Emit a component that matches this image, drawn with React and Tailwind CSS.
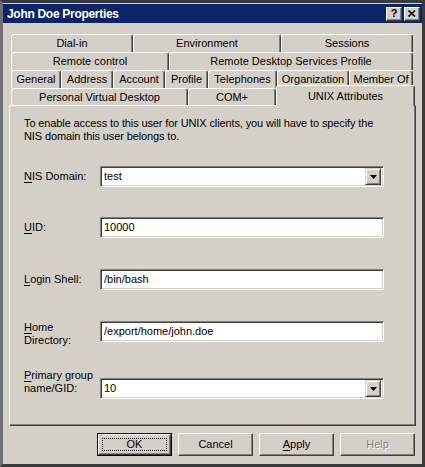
import React from 'react';

const font = { fontFamily: '"Liberation Sans", Arial, sans-serif' };

const tabRows = [
    [
        { label: 'Dial-in', w: 'w-[122px]' },
        { label: 'Environment', w: 'w-[148px]' },
        { label: 'Sessions', w: 'w-[132px]' },
    ],
    [
        { label: 'Remote control', w: 'w-[158px]' },
        { label: 'Remote Desktop Services Profile', w: 'w-[244px]' },
    ],
    [
        { label: 'General', w: 'w-[50px]' },
        { label: 'Address', w: 'w-[52px]' },
        { label: 'Account', w: 'w-[52px]' },
        { label: 'Profile', w: 'w-[43px]' },
        { label: 'Telephones', w: 'w-[69px]' },
        { label: 'Organization', w: 'w-[72px]' },
        { label: 'Member Of', w: 'w-[64px]' },
    ],
];

const Tab = ({ label, w, h = 'h-[18px]' }) => (
    <div
        className={`${w} ${h} flex items-center justify-center border-t border-l border-r border-t-white border-l-white border-r-[#404040] rounded-t-[3px] shadow-[inset_-1px_0_0_#808080] text-[11px] text-black whitespace-nowrap`}
    >
        {label}
    </div>
);

const Sunken = ({ children }) => (
    <div className="h-[21px] w-[284px] flex items-center bg-white border-t border-l border-t-[#808080] border-l-[#808080] border-b border-r border-b-white border-r-white shadow-[inset_1px_1px_0_#404040,inset_-1px_-1px_0_#d4d0c8]">
        {children}
    </div>
);

const TextField = ({ value }) => (
    <Sunken>
        <span className="pl-[3px] text-[11px] text-black">{value}</span>
    </Sunken>
);

const SelectField = ({ value }) => (
    <Sunken>
        <span className="pl-[3px] text-[11px] text-black flex-1">{value}</span>
        <div className="w-[16px] h-[17px] mr-[2px] bg-[#d4d0c8] border-t border-l border-t-[#d4d0c8] border-l-[#d4d0c8] border-b border-r border-b-[#404040] border-r-[#404040] shadow-[inset_1px_1px_0_#fff,inset_-1px_-1px_0_#808080] flex items-center justify-center">
            <svg width="7" height="4" viewBox="0 0 7 4">
                <path d="M0 0h7L3.5 4z" fill="#000" />
            </svg>
        </div>
    </Sunken>
);

const U = ({ children }) => <span className="underline underline-offset-[2px]">{children}</span>;

const Button = ({ children, isDefault, disabled }) => {
    if (isDefault) {
        return (
            <div className="w-[75px] h-[23px] border border-black">
                <div className="w-full h-full border-t border-l border-t-white border-l-white border-b border-r border-b-[#404040] border-r-[#404040] shadow-[inset_-1px_-1px_0_#808080] p-[3px]">
                    <div className="w-full h-full border border-dotted border-black flex items-center justify-center text-[11px] text-black">
                        {children}
                    </div>
                </div>
            </div>
        );
    }
    return (
        <div
            className={`w-[75px] h-[23px] flex items-center justify-center border-t border-l border-t-white border-l-white border-b border-r border-b-[#404040] border-r-[#404040] shadow-[inset_-1px_-1px_0_#808080] text-[11px] ${
                disabled ? 'text-[#808080] [text-shadow:1px_1px_0_#fff]' : 'text-black'
            }`}
        >
            {children}
        </div>
    );
};

const TitleButton = ({ children }) => (
    <div className="w-[16px] h-[14px] bg-[#d4d0c8] border-t border-l border-t-white border-l-white border-b border-r border-b-[#404040] border-r-[#404040] shadow-[inset_-1px_-1px_0_#808080] flex items-center justify-center">
        {children}
    </div>
);

export default function App() {
    return (
        <div className="w-[425px] h-[467px] bg-[#d4d0c8] border-[3px] border-[#3a3a3a] border-l-[#6e6e6e] flex flex-col" style={font}>
            {/* title bar */}
            <div className="mt-px h-[19px] bg-[#0a246a] flex items-center pl-[4px] pr-[2px]">
                <span className="text-white font-bold text-[12px] flex-1 tracking-[-0.3px]">John Doe Properties</span>
                <div className="flex gap-[2px]">
                    <TitleButton>
                        <span className="text-[11px] font-bold leading-none text-black">?</span>
                    </TitleButton>
                    <TitleButton>
                        <svg width="8" height="7" viewBox="0 0 8 7">
                            <path d="M0.5 0.5L7 6.5M7 0.5L0.5 6.5" stroke="#000" strokeWidth="1.6" />
                        </svg>
                    </TitleButton>
                </div>
            </div>

            {/* tab rows */}
            <div className="mt-[11px] ml-[8px] flex flex-col">
                {tabRows.map((row, i) => (
                    <div key={i} className="flex">
                        {row.map((t) => (
                            <Tab key={t.label} label={t.label} w={t.w} />
                        ))}
                    </div>
                ))}
                <div className="flex items-end h-[17px]">
                    <Tab label="Personal Virtual Desktop" w="w-[177px]" h="h-[17px]" />
                    <Tab label="COM+" w="w-[88px]" h="h-[17px]" />
                    <div className="relative z-10 -mt-[3px] w-[139px] h-[21px] self-start bg-[#d4d0c8] border-t border-l border-r border-t-white border-l-white border-r-[#404040] rounded-t-[3px] shadow-[inset_-1px_0_0_#808080] flex justify-center pt-[2px] text-[11px] text-black">
                        UNIX Attributes
                    </div>
                </div>
            </div>

            {/* panel */}
            <div className="ml-[6px] mr-[6px] h-[321px] border-t border-l border-t-white border-l-white border-b border-r border-b-[#404040] border-r-[#404040] shadow-[inset_-1px_-1px_0_#808080] pl-[14px] pt-[11px] text-[11px] text-black">
                <p className="leading-[13px] tracking-[-0.12px]">
                    To enable access to this user for UNIX clients, you will have to specify the
                    <br />
                    NIS domain this user belongs to.
                </p>

                <div className="mt-[23px] flex items-center">
                    <div className="w-[76px]"><U>N</U>IS Domain:</div>
                    <SelectField value="test" />
                </div>

                <div className="mt-[30px] flex items-center">
                    <div className="w-[76px]"><U>U</U>ID:</div>
                    <TextField value="10000" />
                </div>

                <div className="mt-[31px] flex items-center">
                    <div className="w-[76px]"><U>L</U>ogin Shell:</div>
                    <TextField value="/bin/bash" />
                </div>

                <div className="mt-[31px] flex items-start">
                    <div className="w-[76px] leading-[13px]">
                        <U>H</U>ome
                        <br />
                        Directory:
                    </div>
                    <TextField value="/export/home/john.doe" />
                </div>

                <div className="mt-[31px] flex items-start">
                    <div className="w-[76px] leading-[13px] -mt-[9px]">
                        <U>P</U>rimary group
                        <br />
                        name/GID:
                    </div>
                    <SelectField value="10" />
                </div>
            </div>

            {/* buttons */}
            <div className="mt-[7px] mr-[7px] flex justify-end gap-[6px]">
                <Button isDefault>OK</Button>
                <Button>Cancel</Button>
                <Button><U>A</U>pply</Button>
                <Button disabled>Help</Button>
            </div>
        </div>
    );
}
